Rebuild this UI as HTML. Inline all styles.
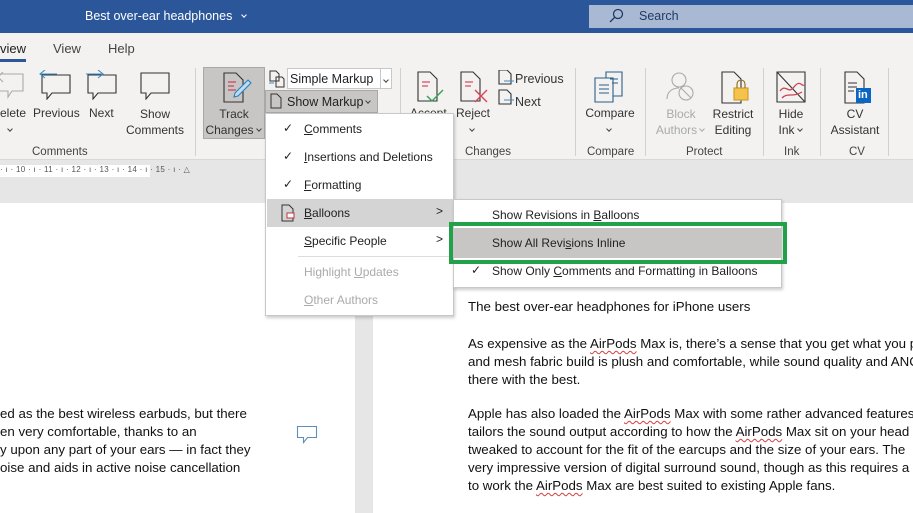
<!DOCTYPE html>
<html><head><meta charset="utf-8"><style>
*{margin:0;padding:0;box-sizing:border-box}
body{width:913px;height:513px;overflow:hidden;position:relative;background:#e6e6e6;font-family:"Liberation Sans",sans-serif;color:#262626}
.a{position:absolute;white-space:nowrap}
.r{font-size:12px;color:#333}
.c{text-align:center}
.g{font-size:11.5px;color:#444}
.sep{position:absolute;width:1px;background:#d0d0d0;top:68px;height:88px}
.m{font-size:12px;color:#222}
.doc{font-size:13.3px;color:#111}
.sq{text-decoration:underline wavy #d04040;text-decoration-thickness:1px;text-underline-offset:2px}
.ch{display:inline-block;width:4px;height:4px;border-right:1px solid #444;border-bottom:1px solid #444;transform:rotate(45deg);margin:0 2px 3px 3px;vertical-align:middle}
.chg{border-color:#aaa}
</style></head><body>
<div class="a" style="left:0;top:0;width:913px;height:33px;background:#2b579a"></div>
<div class="a" style="left:85px;top:9px;font-size:12.5px;color:#fff">Best over-ear headphones <span class="ch" style="border-color:#fff;margin-left:6px"></span></div>
<div class="a" style="left:589px;top:5px;width:324px;height:23px;background:#a9b9d3"></div>
<svg class="a" style="left:608px;top:8px" width="16" height="16"><circle cx="10" cy="6" r="4.5" fill="none" stroke="#1f3a66" stroke-width="1.3"/><line x1="6.5" y1="9.5" x2="2" y2="14" stroke="#1f3a66" stroke-width="1.3"/></svg>
<div class="a" style="left:639px;top:9px;font-size:12.5px;color:#1f3a66">Search</div>
<div class="a" style="left:0;top:33px;width:913px;height:127px;background:#f3f2f1;border-bottom:1px solid #d8d8d8"></div>
<div class="a" style="left:0;top:41px;font-size:13px;color:#222">view</div>
<div class="a" style="left:0;top:59px;width:26px;height:3px;background:#2b579a"></div>
<div class="a" style="left:53px;top:41px;font-size:13px;color:#444">View</div>
<div class="a" style="left:108px;top:41px;font-size:13px;color:#444">Help</div>
<svg class="a" style="left:0;top:70px" width="200" height="30" fill="none" stroke-width="1.1">
<path d="M-2 4h25v17H12l-4 6v-6H-2" stroke="#aaa"/><path d="M3 2l-5 5 5 5" stroke="#aaa"/>
<path d="M42 5h28v18H52l-5 6v-6h-5z" stroke="#333"/><path d="M40 4h17M45 0l-5 4 5 4" stroke="#3a8fc4"/>
<path d="M88 5h28v18H98l-5 6v-6h-5z" stroke="#333"/><path d="M86 4h17M98 0l5 4-5 4" stroke="#3a8fc4"/>
<path d="M141 3h28v20h-18l-5 6v-6h-5z" stroke="#333"/>
</svg>
<div class="a r" style="left:0;top:106px">elete</div>
<div class="a" style="left:5px;top:122px"><span class="ch"></span></div>
<div class="a r" style="left:33px;top:106px">Previous</div>
<div class="a r" style="left:89px;top:106px">Next</div>
<div class="a r c" style="left:120px;top:106px;width:70px;line-height:16px;white-space:normal">Show Comments</div>
<div class="a g" style="left:32px;top:146px">Comments</div>
<div class="sep" style="left:195px"></div>
<div class="a" style="left:203px;top:67px;width:62px;height:72px;background:#c8c6c4;border:1px solid #a8a8a8"></div>
<svg class="a" style="left:220px;top:72px" width="34" height="32" fill="none" stroke-width="1.1"><path d="M4 1h12l7 7v22H4z" stroke="#333"/><path d="M8 10h8M8 14h6M8 18h8" stroke="#c24"/><path d="M28 8l3 3-13 13-4 1 1-4z" stroke="#2a7fc0" fill="#bcdcf0"/></svg>
<div class="a r c" style="left:203px;top:106px;width:62px;line-height:16px">Track<br>Changes<span class="ch"></span></div>
<svg class="a" style="left:268px;top:70px" width="17" height="18" fill="none" stroke="#333"><path d="M2 1h6l3 3v7H2z"/><path d="M8 7h6l2 2v8H8z"/><path d="M1 13h5" stroke="#3a8fc4"/></svg>
<div class="a" style="left:287px;top:68px;width:105px;height:21px;background:#fff;border:1px solid #c8c8c8"></div>
<div class="a" style="left:380px;top:69px;width:1px;height:19px;background:#c8c8c8"></div>
<div class="a r" style="left:290px;top:72px;font-size:12.5px;color:#222">Simple Markup</div>
<div class="a" style="left:381px;top:73px"><span class="ch"></span></div>
<div class="a" style="left:265px;top:90px;width:113px;height:23px;background:#c8c6c4;border:1px solid #a8a8a8"></div>
<svg class="a" style="left:270px;top:93px" width="12" height="16" fill="none" stroke="#333"><path d="M1 1h6l4 4v10H1z"/></svg>
<div class="a r" style="left:287px;top:95px;font-size:12.5px;color:#222">Show Markup<span class="ch"></span></div>
<div class="sep" style="left:400px"></div>
<svg class="a" style="left:413px;top:70px" width="170" height="36" fill="none" stroke-width="1.1">
<path d="M5 2h12l7 7v22H5z" stroke="#333"/><path d="M9 12h8M9 16h6" stroke="#c24"/><path d="M14 26l5 5 11-11" stroke="#3aa35a" stroke-width="1.5"/>
<path d="M48 2h12l7 7v22H48z" stroke="#333"/><path d="M52 12h8M52 16h6" stroke="#c24"/><path d="M62 20l12 12M74 20L62 32" stroke="#e04050" stroke-width="1.4"/>
<path d="M86 0h8l4 4v10H86z M86 20h8l4 4v10H86z" stroke="#333"/><path d="M91 11h10M91 30h10" stroke="#3a8fc4"/>
</svg>
<div class="a r" style="left:410px;top:106px">Accept</div>
<div class="a r" style="left:515px;top:72px;font-size:12.5px">Previous</div>
<div class="a r" style="left:515px;top:95px;font-size:12.5px">Next</div>
<div class="a r" style="left:456px;top:106px">Reject</div>
<div class="a" style="left:467px;top:122px"><span class="ch"></span></div>
<div class="a g" style="left:465px;top:146px">Changes</div>
<div class="sep" style="left:575px"></div>
<svg class="a" style="left:592px;top:71px" width="34" height="32" fill="none" stroke="#2a5f8a" stroke-width="1.1"><path d="M14 1h16v24H14z" fill="#f3f2f1"/><path d="M3 7h18v24H3z" fill="#f3f2f1"/><path d="M7 14h10M7 18h10M7 22h10M18 8h8M20 12h6"/></svg>
<div class="a r c" style="left:580px;top:106px;width:60px">Compare</div>
<div class="a" style="left:604px;top:122px"><span class="ch"></span></div>
<div class="a g" style="left:587px;top:146px">Compare</div>
<div class="sep" style="left:645px"></div>
<svg class="a" style="left:666px;top:71px" width="34" height="34" fill="none" stroke="#aaa" stroke-width="1.1"><circle cx="13" cy="9" r="7"/><path d="M1 28c0-8 6-11 12-11"/><circle cx="20" cy="22" r="7"/><path d="M15 17l10 10"/></svg>
<svg class="a" style="left:720px;top:71px" width="34" height="34" fill="none" stroke-width="1.1"><path d="M2 1h12l7 7v24H2z" stroke="#333"/><rect x="14" y="17" width="14" height="12" fill="#f5c34c" stroke="#c99a20"/><path d="M17 17v-4a4 4 0 0 1 8 0v4" stroke="#8a6a10"/></svg>
<div class="a r c" style="left:650px;top:106px;width:62px;line-height:16px;color:#aaa">Block<br>Authors<span class="ch chg"></span></div>
<div class="a r c" style="left:706px;top:106px;width:54px;line-height:16px;white-space:normal">Restrict Editing</div>
<div class="a g" style="left:686px;top:146px">Protect</div>
<div class="sep" style="left:763px"></div>
<svg class="a" style="left:776px;top:71px" width="32" height="32" fill="none" stroke-width="1.1"><path d="M1 1h28v30H1z" stroke="#333"/><path d="M1 1l28 30" stroke="#333"/><path d="M4 20c6-8 8 4 14-4s8 0 10-2M6 27c6-6 10 0 20-6" stroke="#d04050" stroke-width="1.3"/></svg>
<div class="a r c" style="left:770px;top:106px;width:42px;line-height:16px">Hide<br>Ink<span class="ch"></span></div>
<div class="a g" style="left:784px;top:146px">Ink</div>
<div class="sep" style="left:820px"></div>
<svg class="a" style="left:843px;top:71px" width="32" height="34" fill="none" stroke-width="1.1"><path d="M2 1h12l7 7v24H2z" stroke="#333"/><path d="M5 12h9M5 16h9M5 20h6" stroke="#333"/><rect x="13" y="17" width="15" height="15" fill="#0a66c2"/></svg>
<div class="a" style="left:858px;top:89px;font-size:11px;font-weight:bold;color:#fff">in</div>
<div class="a r c" style="left:825px;top:106px;width:60px;line-height:16px;white-space:normal">CV Assistant</div>
<div class="a g" style="left:849px;top:146px">CV</div>
<div class="sep" style="left:888px"></div>
<div class="a" style="left:0;top:165px;width:150px;height:12px;background:#fff"></div>
<div class="a" style="left:0;top:165px;font-size:8px;color:#555;letter-spacing:0.3px">· ı · 10 · ı · 11 · ı · 12 · ı · 13 · ı · 14 · ı · 15 · ı · △</div>
<div class="a" style="left:0;top:203px;width:355px;height:310px;background:#fff"></div>
<div class="a" style="left:373px;top:203px;width:540px;height:310px;background:#fff"></div>
<div class="a doc" style="left:0;top:405px;line-height:18px">ed as the best wireless earbuds, but there<br>en very comfortable, thanks to an<br>y upon any part of your ears — in fact they<br>oise and aids in active noise cancellation</div>
<svg class="a" style="left:296px;top:425px" width="24" height="22" fill="none" stroke="#5a8fc0" stroke-width="1.1"><path d="M1.5 1.5h19v11h-9l-4 5v-5h-6z"/></svg>
<div class="a doc" style="left:468px;top:299px">The best over-ear headphones for iPhone users</div>
<div class="a doc" style="left:468px;top:335px;line-height:18px">As expensive as the <span class="sq">AirPods</span> Max is, there’s a sense that you get what you pay<br>and mesh fabric build is plush and comfortable, while sound quality and ANC<br>there with the best.</div>
<div class="a doc" style="left:468px;top:405px;line-height:18px">Apple has also loaded the <span class="sq">AirPods</span> Max with some rather advanced features<br>tailors the sound output according to how the <span class="sq">AirPods</span> Max sit on your head<br>tweaked to account for the fit of the earcups and the size of your ears. The<br>very impressive version of digital surround sound, though as this requires a<br>to work the <span class="sq">AirPods</span> Max are best suited to existing Apple fans.</div>
<div class="a" style="left:265px;top:113px;width:189px;height:203px;background:#fff;border:1px solid #c8c8c8;box-shadow:1px 2px 3px rgba(0,0,0,.2)"></div>
<div class="a" style="left:267px;top:199px;width:186px;height:28px;background:#d4d4d4"></div>
<div class="a m" style="left:283px;top:121px">✓</div>
<div class="a m" style="left:304px;top:122px"><u>C</u>omments</div>
<div class="a m" style="left:283px;top:149px">✓</div>
<div class="a m" style="left:304px;top:150px"><u>I</u>nsertions and Deletions</div>
<div class="a m" style="left:283px;top:177px">✓</div>
<div class="a m" style="left:304px;top:178px"><u>F</u>ormatting</div>
<svg class="a" style="left:280px;top:204px" width="16" height="18" fill="none" stroke-width="1"><path d="M2 1h7l4 4v12H2z" stroke="#333"/><rect x="7" y="9" width="7" height="5" stroke="#c03040" fill="#fff"/></svg>
<div class="a m" style="left:304px;top:206px"><u>B</u>alloons</div>
<div class="a m" style="left:436px;top:204px">&gt;</div>
<div class="a m" style="left:304px;top:234px"><u>S</u>pecific People</div>
<div class="a m" style="left:436px;top:232px">&gt;</div>
<div class="a" style="left:298px;top:256px;width:154px;height:1px;background:#ddd"></div>
<div class="a m" style="left:304px;top:265px;color:#aaa">Highlight <u>U</u>pdates</div>
<div class="a m" style="left:304px;top:293px;color:#aaa"><u>O</u>ther Authors</div>
<div class="a" style="left:453px;top:199px;width:329px;height:89px;background:#fff;border:1px solid #c8c8c8;box-shadow:1px 2px 3px rgba(0,0,0,.2)"></div>
<div class="a" style="left:454px;top:228px;width:327px;height:30px;background:#c8c6c4"></div>
<div class="a" style="left:449px;top:222px;width:338px;height:42px;border:4px solid #22a04a"></div>
<div class="a m" style="left:492px;top:208px">Show Revisions in <u>B</u>alloons</div>
<div class="a m" style="left:492px;top:236px">Show All Revi<u>s</u>ions Inline</div>
<div class="a m" style="left:471px;top:263px">✓</div>
<div class="a m" style="left:492px;top:264px">Show Only <u>C</u>omments and Formatting in Balloons</div>
</body></html>
